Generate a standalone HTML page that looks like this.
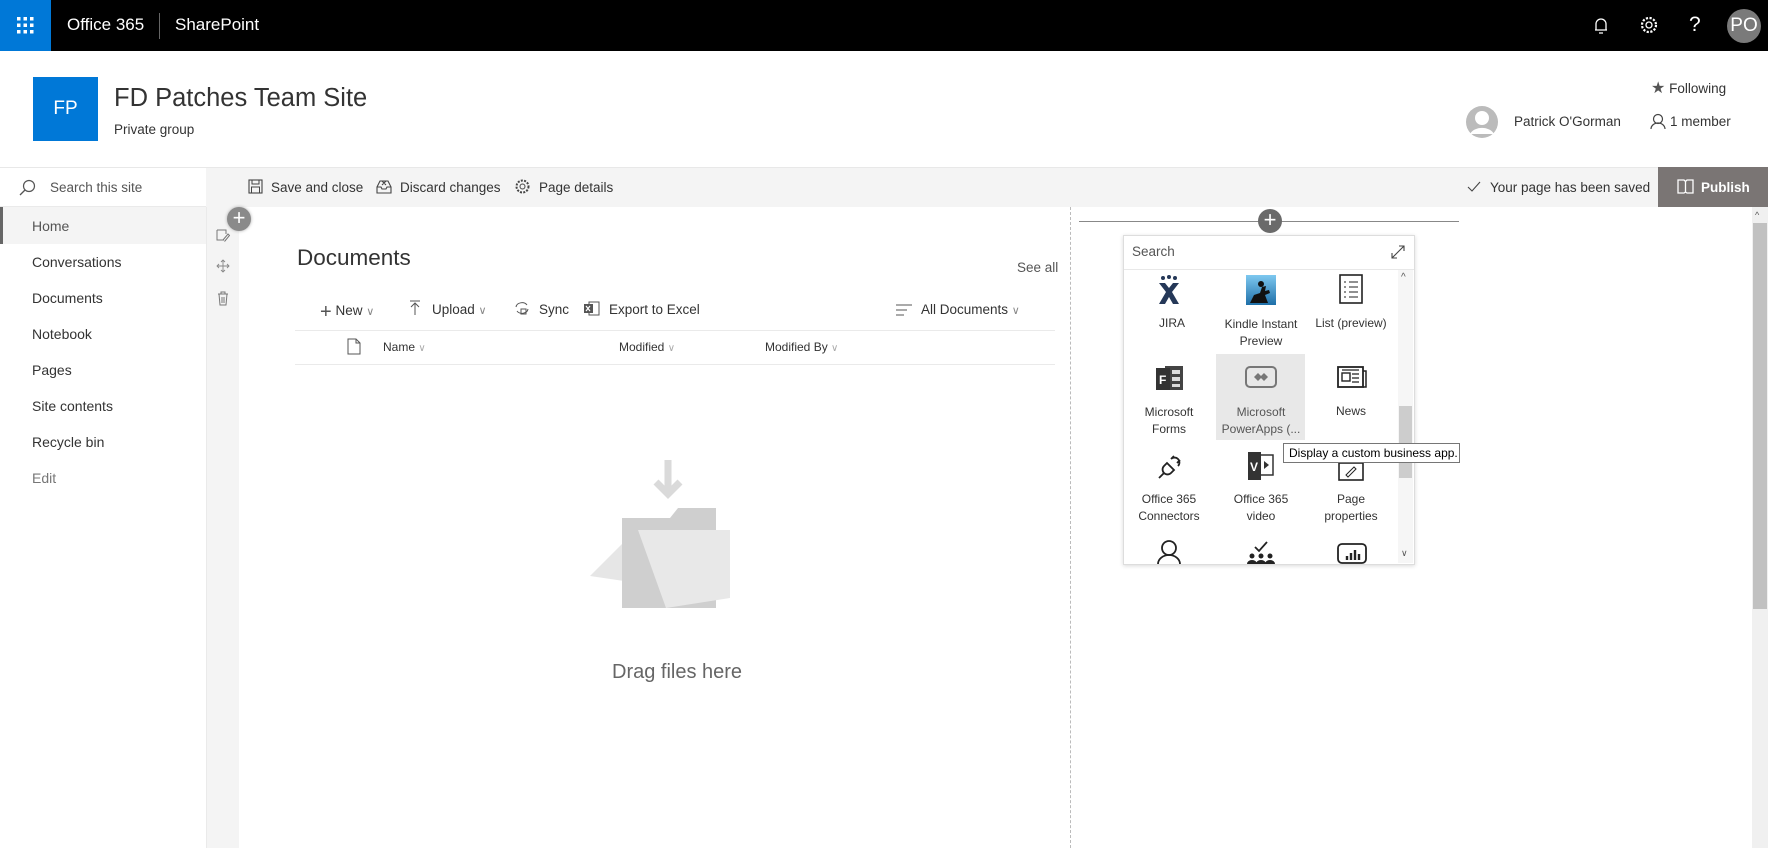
<!DOCTYPE html>
<html><head><meta charset="utf-8"><style>
*{box-sizing:border-box;margin:0;padding:0}
body{width:1768px;height:848px;overflow:hidden;background:#fff;font-family:"Liberation Sans",sans-serif;color:#333;position:relative}
.a{position:absolute;white-space:nowrap}
svg{position:absolute}
</style></head><body>
<!-- top bar -->
<div class="a" style="left:0;top:0;width:1768px;height:51px;background:#000"></div>
<div class="a" style="left:0;top:0;width:51px;height:51px;background:#0078d7"></div>
<svg style="left:17px;top:17px" width="17" height="17"><g fill="#fff">
<rect x="0" y="0" width="3.5" height="3.5"/><rect x="6.5" y="0" width="3.5" height="3.5"/><rect x="13" y="0" width="3.5" height="3.5"/>
<rect x="0" y="6.5" width="3.5" height="3.5"/><rect x="6.5" y="6.5" width="3.5" height="3.5"/><rect x="13" y="6.5" width="3.5" height="3.5"/>
<rect x="0" y="13" width="3.5" height="3.5"/><rect x="6.5" y="13" width="3.5" height="3.5"/><rect x="13" y="13" width="3.5" height="3.5"/></g></svg>
<div class="a" style="left:67px;top:15px;color:#fff;font-size:17px">Office 365</div>
<div class="a" style="left:159px;top:13px;width:1px;height:26px;background:#666"></div>
<div class="a" style="left:175px;top:15px;color:#fff;font-size:17px">SharePoint</div>
<svg style="left:1592px;top:16px" width="18" height="20"><path d="M4 14V8a5 5 0 0 1 10 0v6H4zM3 14h12M7 17h4" stroke="#fff" stroke-width="1.3" fill="none"/></svg>
<svg style="left:1639px;top:15px" width="20" height="20"><circle cx="10" cy="10" r="3" stroke="#fff" fill="none" stroke-width="1.3"/><circle cx="10" cy="10" r="7" stroke="#fff" fill="none" stroke-width="2.2" stroke-dasharray="2.2 1.5"/></svg>
<div class="a" style="left:1689px;top:13px;color:#fff;font-size:21px">?</div>
<div class="a" style="left:1727px;top:9px;width:34px;height:34px;border-radius:50%;background:#7a7a7a;color:#fff;font-size:19px;line-height:34px;text-align:center">PO</div>
<!-- header -->
<div class="a" style="left:33px;top:77px;width:65px;height:64px;background:#0078d7;color:#fff;font-size:19px;line-height:64px;text-align:center">FP</div>
<div class="a" style="left:114px;top:84px;font-size:25.5px;color:#333">FD Patches Team Site</div>
<div class="a" style="left:114px;top:122px;font-size:13.5px;color:#333">Private group</div>
<div class="a" style="left:1651px;top:78px;font-size:13.5px;color:#333"><span style="color:#555;font-size:16px">★</span> Following</div>
<svg style="left:1465px;top:105px" width="34" height="34"><circle cx="17" cy="17" r="16" fill="#bbb"/><circle cx="17" cy="13" r="7" fill="#fff"/><path d="M5 29a13 10 0 0 1 24 0" fill="#fff"/></svg>
<div class="a" style="left:1514px;top:114px;font-size:13.5px;color:#333">Patrick O'Gorman</div>
<svg style="left:1650px;top:113px" width="16" height="17"><circle cx="8" cy="6" r="4.5" stroke="#444" fill="none" stroke-width="1.2"/><path d="M1 16a7 6 0 0 1 14 0" stroke="#444" fill="none" stroke-width="1.2"/></svg>
<div class="a" style="left:1670px;top:114px;font-size:13.5px;color:#333">1 member</div>
<!-- command bar -->
<div class="a" style="left:0;top:167px;width:1768px;height:1px;background:#e8e8e8"></div>
<div class="a" style="left:206px;top:168px;width:1452px;height:39px;background:#f4f4f4"></div>
<div class="a" style="left:0;top:206px;width:206px;height:1px;background:#eaeaea"></div>
<svg style="left:18px;top:179px" width="18" height="18"><circle cx="11" cy="7" r="5.5" stroke="#555" fill="none" stroke-width="1.2"/><path d="M7 11L2 16" stroke="#555" stroke-width="1.3"/></svg>
<div class="a" style="left:50px;top:180px;font-size:13.5px;color:#555">Search this site</div>
<svg style="left:248px;top:179px" width="15" height="15"><rect x="1" y="1" width="13" height="13" stroke="#444" fill="none" stroke-width="1.1"/><rect x="4" y="1" width="7" height="4" stroke="#444" fill="none"/><rect x="3.5" y="8" width="8" height="6" stroke="#444" fill="none"/></svg>
<div class="a" style="left:271px;top:180px;font-size:13.5px;color:#333">Save and close</div>
<svg style="left:376px;top:178px" width="16" height="16"><path d="M1 9l3-6h8l3 6v6H1zM1 9h4l1 2h4l1-2h4M6 3l4 4M10 3L6 7" stroke="#444" fill="none" stroke-width="1.1"/></svg>
<div class="a" style="left:400px;top:180px;font-size:13.5px;color:#333">Discard changes</div>
<svg style="left:514px;top:178px" width="17" height="17"><circle cx="8.5" cy="8.5" r="2.5" stroke="#444" fill="none"/><circle cx="8.5" cy="8.5" r="6" stroke="#444" fill="none" stroke-width="2" stroke-dasharray="2 1.3"/></svg>
<div class="a" style="left:539px;top:180px;font-size:13.5px;color:#333">Page details</div>
<svg style="left:1467px;top:181px" width="14" height="12"><path d="M1 6l4 4 8-9" stroke="#444" fill="none" stroke-width="1.1"/></svg>
<div class="a" style="left:1490px;top:180px;font-size:13.5px;color:#333">Your page has been saved</div>
<div class="a" style="left:1658px;top:167px;width:110px;height:40px;background:#7a7574"></div>
<svg style="left:1677px;top:179px" width="17" height="15"><path d="M1 1h6l1.5 1.5L10 1h6v13h-6l-1.5-1L7 14H1zM8.5 2.5v10.5" stroke="#fff" fill="none" stroke-width="1.3"/></svg>
<div class="a" style="left:1701px;top:180px;font-size:13.5px;color:#fff;font-weight:bold">Publish</div>
<!-- nav -->
<div class="a" style="left:0;top:207px;width:206px;height:37px;background:#f4f4f4;border-left:3px solid #666"></div>
<div class="a" style="left:32px;top:218px;font-size:14px;color:#555">Home</div>
<div class="a" style="left:32px;top:254px;font-size:14px;color:#333">Conversations</div>
<div class="a" style="left:32px;top:290px;font-size:14px;color:#333">Documents</div>
<div class="a" style="left:32px;top:326px;font-size:14px;color:#333">Notebook</div>
<div class="a" style="left:32px;top:362px;font-size:14px;color:#333">Pages</div>
<div class="a" style="left:32px;top:398px;font-size:14px;color:#333">Site contents</div>
<div class="a" style="left:32px;top:434px;font-size:14px;color:#333">Recycle bin</div>
<div class="a" style="left:32px;top:470px;font-size:14px;color:#777">Edit</div>
<!-- canvas -->
<div class="a" style="left:206px;top:207px;width:33px;height:641px;background:#f4f4f4;border-left:1px solid #eaeaea"></div>
<div class="a" style="left:1070px;top:207px;width:0;height:641px;border-left:1px dashed #bbb"></div>
<div class="a" style="left:1752px;top:207px;width:16px;height:641px;background:#f0f0f0"></div>
<div class="a" style="left:1753px;top:223px;width:14px;height:386px;background:#c1c1c1"></div>
<div class="a" style="left:1755px;top:210px;font-size:9px;color:#555">^</div>
<div class="a" style="left:227px;top:207px;width:24px;height:24px;border-radius:50%;background:#8a8a8a;color:#fff;font-size:22px;line-height:22px;text-align:center;box-shadow:0 0 3px #aaa">+</div>
<svg style="left:216px;top:228px" width="14" height="14"><path d="M1 2h9v4M1 2v10h7M7 12l5-6 1.5 1.5-5 6" stroke="#777" fill="none"/></svg>
<svg style="left:216px;top:259px" width="14" height="14"><path d="M7 1v12M1 7h12M5 3l2-2 2 2M5 11l2 2 2-2M3 5L1 7l2 2M11 5l2 2-2 2" stroke="#888" fill="none" stroke-width="0.9"/></svg>
<svg style="left:217px;top:291px" width="12" height="15"><path d="M1 3h10M4 3V1h4v2M2 3l1 11h6l1-11M5 6v6M7 6v6" stroke="#777" fill="none"/></svg>
<!-- documents -->
<div class="a" style="left:297px;top:245px;font-size:22.5px;color:#333">Documents</div>
<div class="a" style="left:1017px;top:260px;font-size:13.5px;color:#555">See all</div>
<div class="a" style="left:320px;top:301px;font-size:13.5px;color:#333"><span style="font-size:20px;color:#555;vertical-align:-3px">+</span> New <span style="color:#888;font-size:11px">∨</span></div>
<svg style="left:409px;top:300px" width="12" height="16"><path d="M1 1h10M6 3v12M2 7l4-4 4 4" stroke="#555" fill="none"/></svg>
<div class="a" style="left:432px;top:302px;font-size:13.5px;color:#333">Upload <span style="color:#888;font-size:11px">∨</span></div>
<svg style="left:513px;top:300px" width="18" height="16"><path d="M3 7a6 5 0 0 1 11-2M15 9a6 5 0 0 1-11 2" stroke="#555" fill="none"/><rect x="8" y="9" width="5" height="5" stroke="#555" fill="none"/></svg>
<div class="a" style="left:539px;top:302px;font-size:13.5px;color:#333">Sync</div>
<svg style="left:584px;top:301px" width="16" height="15"><rect x="5" y="1" width="10" height="13" stroke="#555" fill="none"/><rect x="0" y="3" width="9" height="9" fill="#555"/><path d="M2 5l4 5M6 5l-4 5" stroke="#fff" stroke-width="1.2"/></svg>
<div class="a" style="left:609px;top:302px;font-size:13.5px;color:#333">Export to Excel</div>
<svg style="left:896px;top:304px" width="16" height="12"><path d="M0 1h16M0 6h11M0 11h8" stroke="#555"/></svg>
<div class="a" style="left:921px;top:302px;font-size:13.5px;color:#333">All Documents <span style="color:#888;font-size:11px">∨</span></div>
<div class="a" style="left:295px;top:330px;width:760px;height:1px;background:#eaeaea"></div>
<svg style="left:347px;top:338px" width="14" height="17"><path d="M1 1h8l4 4v11H1zM9 1v4h4" stroke="#555" fill="none"/></svg>
<div class="a" style="left:383px;top:340px;font-size:12px;color:#333">Name <span style="color:#aaa;font-size:10px">∨</span></div>
<div class="a" style="left:619px;top:340px;font-size:12px;color:#333">Modified <span style="color:#aaa;font-size:10px">∨</span></div>
<div class="a" style="left:765px;top:340px;font-size:12px;color:#333">Modified By <span style="color:#aaa;font-size:10px">∨</span></div>
<div class="a" style="left:295px;top:364px;width:760px;height:1px;background:#eaeaea"></div>
<svg style="left:586px;top:458px" width="160" height="150">
<path d="M4 118l38-38h60l-30 48z" fill="#e6e6e6"/>
<path d="M36 60h48l8-10h38v100H36z" fill="#cfcfcf"/>
<path d="M52 72h92v68L80 150z" fill="#e8e8e8"/>
<path d="M82 2v30M70 24l12 12 12-12" stroke="#dadada" stroke-width="7" fill="none"/>
</svg>
<div class="a" style="left:612px;top:661px;font-size:20px;color:#666">Drag files here</div>
<!-- right column -->
<div class="a" style="left:1079px;top:221px;width:380px;height:1px;background:#888"></div>
<div class="a" style="left:1258px;top:209px;width:24px;height:24px;border-radius:50%;background:#6a6a6a;color:#fff;font-size:22px;line-height:22px;text-align:center">+</div>
<div class="a" style="left:1123px;top:235px;width:292px;height:330px;background:#fff;border:1px solid #ddd;box-shadow:0 1px 4px rgba(0,0,0,.15)"></div>
<div class="a" style="left:1132px;top:244px;font-size:13.5px;color:#555">Search</div>
<svg style="left:1390px;top:244px" width="16" height="16"><path d="M2 14L14 2M9 2h5v5M2 9v5h5" stroke="#444" fill="none" stroke-width="1.1"/></svg>
<div class="a" style="left:1124px;top:269px;width:290px;height:1px;background:#e8e8e8"></div>
<div class="a" style="left:1398px;top:270px;width:15px;height:293px;background:#f6f6f6"></div>
<div class="a" style="left:1399px;top:406px;width:13px;height:72px;background:#cdcdcd"></div>
<div class="a" style="left:1401px;top:272px;font-size:10px;color:#555">^</div>
<div class="a" style="left:1401px;top:548px;font-size:9px;color:#555">∨</div>
<div class="a" style="left:1216px;top:354px;width:89px;height:86px;background:#e8e8e8"></div>
<!-- row1 -->
<svg style="left:1156px;top:275px" width="26" height="30"><g fill="#253858"><circle cx="7" cy="3" r="2"/><circle cx="13" cy="2" r="2"/><circle cx="19" cy="3" r="2"/><path d="M3 8l7 9-7 12h6l4-7 4 7h6l-7-12 7-9h-6l-4 5-4-5z"/></g></svg>
<div class="a" style="left:1159px;top:316px;font-size:12px;color:#333">JIRA</div>
<svg style="left:1246px;top:275px" width="30" height="30"><defs><linearGradient id="k" x1="0" y1="0" x2="0" y2="1"><stop offset="0" stop-color="#7ec8f0"/><stop offset="1" stop-color="#1e6fa8"/></linearGradient></defs><rect width="30" height="30" fill="url(#k)"/><path d="M4 28l4-8 6-2 2-6 4-1-1 5 4-1 1 3-5 2 3 8z" fill="#111"/><circle cx="15" cy="9" r="3" fill="#111"/></svg>
<div class="a" style="left:1261px;top:316px;font-size:12px;color:#333;transform:translateX(-50%);text-align:center;line-height:17px">Kindle Instant<br>Preview</div>
<svg style="left:1339px;top:274px" width="24" height="30"><rect x="1" y="1" width="22" height="28" stroke="#222" fill="none" stroke-width="1.6"/><path d="M5 8h2M10 8h9M5 13h2M10 13h9M5 18h2M10 18h9M5 23h2M10 23h9" stroke="#222"/></svg>
<div class="a" style="left:1351px;top:316px;font-size:12px;color:#333;transform:translateX(-50%)">List (preview)</div>
<!-- row2 -->
<svg style="left:1156px;top:364px" width="28" height="28"><rect x="9" y="2" width="18" height="24" fill="#444"/><rect x="0" y="4" width="14" height="22" fill="#333"/><text x="3" y="20" fill="#fff" font-size="12" font-weight="bold" font-family="Liberation Sans">F</text><rect x="16" y="6" width="8" height="4" fill="#ddd"/><rect x="16" y="13" width="8" height="4" fill="#ddd"/><rect x="16" y="20" width="8" height="3" fill="#ddd"/></svg>
<div class="a" style="left:1169px;top:404px;font-size:12px;color:#333;transform:translateX(-50%);text-align:center;line-height:17px">Microsoft<br>Forms</div>
<svg style="left:1245px;top:366px" width="32" height="22"><rect x="1" y="1" width="30" height="20" rx="4" stroke="#777" fill="none" stroke-width="2"/><path d="M9 11l4-4 4 4-4 4zM15 11l4-4 4 4-4 4z" fill="#777"/></svg>
<div class="a" style="left:1261px;top:404px;font-size:12px;color:#555;transform:translateX(-50%);text-align:center;line-height:17px">Microsoft<br>PowerApps (...</div>
<svg style="left:1337px;top:366px" width="30" height="22"><rect x="1" y="1" width="25" height="20" stroke="#222" fill="none" stroke-width="1.8"/><path d="M26 5h3v16h-3" stroke="#222" fill="none" stroke-width="1.5"/><rect x="5" y="7" width="8" height="8" stroke="#222" fill="none" stroke-width="1.4"/><path d="M15 8h7M15 12h7M15 16h7M5 4h17" stroke="#222" stroke-width="1.3"/></svg>
<div class="a" style="left:1351px;top:404px;font-size:12px;color:#333;transform:translateX(-50%)">News</div>
<!-- row3 -->
<svg style="left:1155px;top:452px" width="30" height="30"><path d="M4 26l5-5M9 21a5 5 0 0 1 0-7l3-3 7 7-3 3a5 5 0 0 1-7 0zM19 4l-3 3M22 11l3-3M16 7a5 5 0 0 1 7 0a5 5 0 0 1 0 7" stroke="#222" fill="none" stroke-width="1.8"/></svg>
<div class="a" style="left:1169px;top:491px;font-size:12px;color:#333;transform:translateX(-50%);text-align:center;line-height:17px">Office 365<br>Connectors</div>
<svg style="left:1247px;top:451px" width="28" height="30"><rect x="10" y="4" width="16" height="20" stroke="#333" fill="none" stroke-width="1.5"/><rect x="1" y="1" width="13" height="28" fill="#333"/><text x="3" y="20" fill="#fff" font-size="12" font-weight="bold" font-family="Liberation Sans">V</text><path d="M17 10v8l5-4z" fill="#333"/></svg>
<div class="a" style="left:1261px;top:491px;font-size:12px;color:#333;transform:translateX(-50%);text-align:center;line-height:17px">Office 365<br>video</div>
<svg style="left:1338px;top:462px" width="26" height="20"><rect x="1" y="1" width="24" height="17" stroke="#222" fill="none" stroke-width="1.6"/><path d="M8 13l8-8 2 2-8 8z" stroke="#222" fill="none"/></svg>
<div class="a" style="left:1351px;top:491px;font-size:12px;color:#333;transform:translateX(-50%);text-align:center;line-height:17px">Page<br>properties</div>
<!-- row4 -->
<svg style="left:1156px;top:540px" width="26" height="24"><circle cx="13" cy="8" r="7" stroke="#222" fill="none" stroke-width="1.8"/><path d="M2 24a11 9 0 0 1 22 0" stroke="#222" fill="none" stroke-width="1.8"/></svg>
<svg style="left:1246px;top:540px" width="30" height="24"><path d="M9 7l4 4 8-9" stroke="#222" fill="none" stroke-width="1.8"/><circle cx="6" cy="16" r="2.5" fill="#222"/><circle cx="15" cy="16" r="2.5" fill="#222"/><circle cx="24" cy="16" r="2.5" fill="#222"/><path d="M1 24a5 4 0 0 1 10 0M10 24a5 4 0 0 1 10 0M19 24a5 4 0 0 1 10 0" fill="#222"/></svg>
<svg style="left:1337px;top:543px" width="30" height="22"><rect x="1" y="1" width="28" height="19" rx="4" stroke="#222" fill="none" stroke-width="1.8"/><path d="M10 17v-4M14 17v-7M18 17v-10M22 17v-6" stroke="#222" stroke-width="2.4"/></svg>
<!-- tooltip -->
<div class="a" style="left:1283px;top:443px;width:177px;height:20px;background:#fff;border:1px solid #767676;font-size:12px;line-height:18px;padding-left:5px;color:#000">Display a custom business app.</div>
</body></html>
